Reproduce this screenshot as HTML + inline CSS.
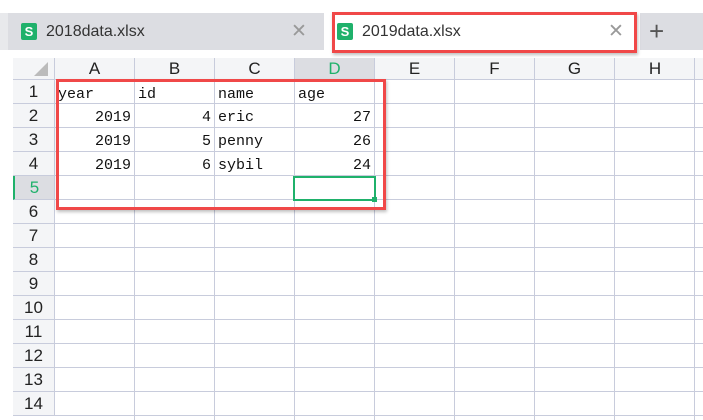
<!DOCTYPE html>
<html><head><style>
*{margin:0;padding:0;box-sizing:border-box}
body{width:703px;height:420px;overflow:hidden;background:#fff;font-family:"Liberation Sans",sans-serif;position:relative}
.a{position:absolute}
.tabbar{left:0;top:13px;width:703px;height:37px;background:#dcdde2}
.tab{top:13px;height:37px;font-size:16px;color:#333;line-height:37px}
.ic{position:absolute;top:10px;width:16px;height:17px;background:#1fb16b;border-radius:2px;color:#fff;font-size:13px;line-height:17px;text-align:center;font-weight:bold}
.x{position:absolute;top:0;font-size:19px;color:#999;font-weight:300}
.ch{top:58px;height:22px;background:#f4f5f7;border-right:1px solid #c8ccdc;border-bottom:1px solid #c8ccdc;text-align:center;font-size:17px;line-height:22px;color:#222}
.rh{left:13px;width:42px;height:24px;background:#f4f5f7;border-bottom:1px solid #c8ccdc;border-right:1px solid #c8ccdc;text-align:center;font-size:17px;line-height:24px;color:#222}
.vl{top:58px;width:1px;height:362px;background:#c8ccdc}
.hl{left:55px;width:648px;height:1px;background:#c8ccdc}
.c{font-family:"Liberation Mono","DejaVu Sans Mono",monospace;font-size:15px;line-height:24px;color:#111}
</style></head><body>
<div class="a tabbar"></div>
<div class="a" style="left:0;top:13px;width:8px;height:37px;background:#e8e9ec"></div>
<div class="a tab" style="left:8px;width:316px">
<div class="ic" style="left:13px">S</div><span style="position:absolute;left:38px">2018data.xlsx</span><span class="x" style="left:283px">✕</span></div>
<div class="a tab" style="left:324px;width:316px;background:#fff"></div>
<div class="a tab" style="left:324px;width:316px">
<div class="ic" style="left:13px">S</div><span style="position:absolute;left:38px">2019data.xlsx</span><span class="x" style="left:284px">✕</span></div>
<div class="a" style="left:332px;top:12px;width:305px;height:41px;border:3px solid #f04848;box-shadow:1px 2px 3px rgba(0,0,0,.25)"></div>
<div class="a" style="left:649px;top:13px;font-size:26px;line-height:37px;color:#555">+</div>
<div class="a" style="left:13px;top:58px;width:42px;height:22px;background:#f4f5f7;border-right:1px solid #c8ccdc;border-bottom:1px solid #c8ccdc"></div>
<div class="a" style="left:34px;top:62px;width:0;height:0;border-left:14px solid transparent;border-bottom:14px solid #bbb"></div>
<div class="a ch" style="left:55px;width:80px">A</div>
<div class="a ch" style="left:135px;width:80px">B</div>
<div class="a ch" style="left:215px;width:80px">C</div>
<div class="a ch" style="left:295px;width:80px;background:#dcdde2;color:#1fb16b">D</div>
<div class="a ch" style="left:375px;width:80px">E</div>
<div class="a ch" style="left:455px;width:80px">F</div>
<div class="a ch" style="left:535px;width:80px">G</div>
<div class="a ch" style="left:615px;width:88px;border-right:none;padding-right:8px">H</div>
<div class="a vl" style="left:134px"></div><div class="a vl" style="left:214px"></div><div class="a vl" style="left:294px"></div><div class="a vl" style="left:374px"></div><div class="a vl" style="left:454px"></div><div class="a vl" style="left:534px"></div><div class="a vl" style="left:614px"></div><div class="a vl" style="left:694px"></div>
<div class="a rh" style="top:80px">1</div><div class="a rh" style="top:104px">2</div><div class="a rh" style="top:128px">3</div><div class="a rh" style="top:152px">4</div>
<div class="a rh" style="top:176px;background:#dcdde2;color:#1fb16b;border-left:2px solid #1fb16b">5</div>
<div class="a rh" style="top:200px">6</div><div class="a rh" style="top:224px">7</div><div class="a rh" style="top:248px">8</div><div class="a rh" style="top:272px">9</div><div class="a rh" style="top:296px">10</div><div class="a rh" style="top:320px">11</div><div class="a rh" style="top:344px">12</div><div class="a rh" style="top:368px">13</div><div class="a rh" style="top:392px">14</div>
<div class="a hl" style="top:103px"></div><div class="a hl" style="top:127px"></div><div class="a hl" style="top:151px"></div><div class="a hl" style="top:175px"></div><div class="a hl" style="top:199px"></div><div class="a hl" style="top:223px"></div><div class="a hl" style="top:247px"></div><div class="a hl" style="top:271px"></div><div class="a hl" style="top:295px"></div><div class="a hl" style="top:319px"></div><div class="a hl" style="top:343px"></div><div class="a hl" style="top:367px"></div><div class="a hl" style="top:391px"></div><div class="a hl" style="top:415px"></div>
<div class="a c" style="left:58px;top:83px">year</div><div class="a c" style="left:138px;top:83px">id</div><div class="a c" style="left:218px;top:83px">name</div><div class="a c" style="left:298px;top:83px">age</div>
<div class="a c" style="left:55px;width:76px;text-align:right;top:106px">2019</div><div class="a c" style="left:135px;width:76px;text-align:right;top:106px">4</div><div class="a c" style="left:218px;top:106px">eric</div><div class="a c" style="left:295px;width:76px;text-align:right;top:106px">27</div>
<div class="a c" style="left:55px;width:76px;text-align:right;top:130px">2019</div><div class="a c" style="left:135px;width:76px;text-align:right;top:130px">5</div><div class="a c" style="left:218px;top:130px">penny</div><div class="a c" style="left:295px;width:76px;text-align:right;top:130px">26</div>
<div class="a c" style="left:55px;width:76px;text-align:right;top:154px">2019</div><div class="a c" style="left:135px;width:76px;text-align:right;top:154px">6</div><div class="a c" style="left:218px;top:154px">sybil</div><div class="a c" style="left:295px;width:76px;text-align:right;top:154px">24</div>
<div class="a" style="left:293px;top:176px;width:83px;height:25px;border:2px solid #1fb16b"></div>
<div class="a" style="left:372px;top:197px;width:5px;height:5px;background:#1fb16b"></div>
<div class="a" style="left:56px;top:79px;width:330px;height:131px;border:3px solid #f04848;box-shadow:1px 2px 3px rgba(0,0,0,.25)"></div>
</body></html>
